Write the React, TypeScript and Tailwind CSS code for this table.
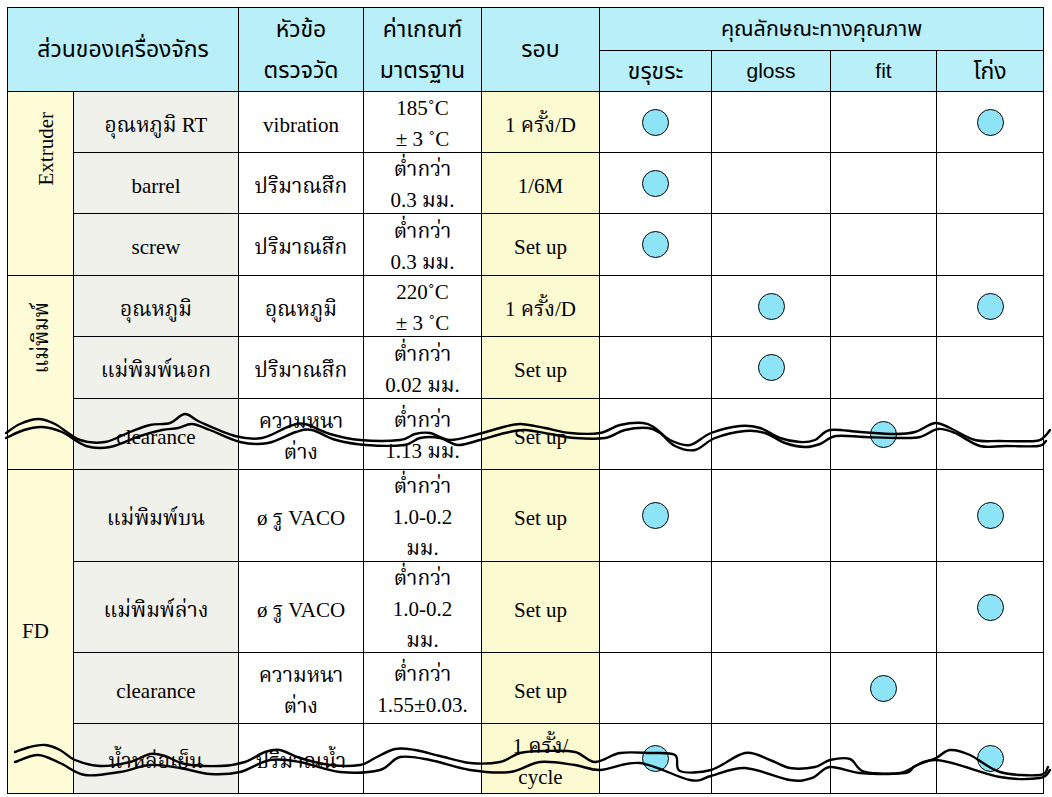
import React from "react"

type Row = {
  group?: { label: string; span: number; kind: "up" | "flat" }
  part: string
  topic: string
  spec: string[]
  cycle: string[]
  marks: number[]
}

const ROWS: Row[] = [
  {
    group: { label: "Extruder", span: 3, kind: "up" },
    part: "อุณหภูมิ RT",
    topic: "vibration",
    spec: ["185˚C", "± 3 ˚C"],
    cycle: ["1 ครั้ง/D"],
    marks: [1, 0, 0, 1],
  },
  { part: "barrel", topic: "ปริมาณสึก", spec: ["ต่ำกว่า", "0.3 มม."], cycle: ["1/6M"], marks: [1, 0, 0, 0] },
  { part: "screw", topic: "ปริมาณสึก", spec: ["ต่ำกว่า", "0.3 มม."], cycle: ["Set up"], marks: [1, 0, 0, 0] },
  {
    group: { label: "แม่พิมพ์", span: 3, kind: "up" },
    part: "อุณหภูมิ",
    topic: "อุณหภูมิ",
    spec: ["220˚C", "± 3 ˚C"],
    cycle: ["1 ครั้ง/D"],
    marks: [0, 1, 0, 1],
  },
  { part: "แม่พิมพ์นอก", topic: "ปริมาณสึก", spec: ["ต่ำกว่า", "0.02 มม."], cycle: ["Set up"], marks: [0, 1, 0, 0] },
  { part: "clearance", topic: "ความหนา\nต่าง", spec: ["ต่ำกว่า", "1.13 มม."], cycle: ["Set up"], marks: [0, 0, 1, 0] },
  {
    group: { label: "FD", span: 4, kind: "flat" },
    part: "แม่พิมพ์บน",
    topic: "ø รู VACO",
    spec: ["ต่ำกว่า", "1.0-0.2", "มม."],
    cycle: ["Set up"],
    marks: [1, 0, 0, 1],
  },
  { part: "แม่พิมพ์ล่าง", topic: "ø รู VACO", spec: ["ต่ำกว่า", "1.0-0.2", "มม."], cycle: ["Set up"], marks: [0, 0, 0, 1] },
  { part: "clearance", topic: "ความหนา\nต่าง", spec: ["ต่ำกว่า", "1.55±0.03."], cycle: ["Set up"], marks: [0, 0, 1, 0] },
  { part: "น้ำหล่อเย็น", topic: "ปริมาณน้ำ", spec: [], cycle: ["1 ครั้ง/", "cycle"], marks: [1, 0, 0, 1] },
]

// hand-drawn strike lines
const WAVES: [number, number][][] = [
  [[6,433],[20,424],[38,419],[55,424],[80,440],[105,442],[130,432],[150,425],[170,423],[185,414],[200,422],[235,436],[262,438],[290,426],[305,424],[330,434],[360,440],[400,440],[415,434],[430,433],[450,440],[475,435],[500,428],[520,424],[545,428],[570,433],[600,433],[620,425],[643,423],[655,428],[670,440],[690,445],[711,433],[740,426],[760,428],[780,438],[800,442],[815,440],[830,430],[860,432],[895,434],[915,432],[935,423],[950,428],[975,440],[1000,441],[1035,441],[1044,437],[1050,430]],
  [[6,438],[24,430],[42,427],[62,432],[86,446],[110,447],[140,436],[162,430],[178,428],[192,424],[210,430],[240,442],[268,443],[296,432],[312,430],[336,440],[366,445],[404,445],[420,438],[440,438],[458,445],[480,440],[505,433],[525,430],[550,434],[575,438],[605,438],[625,430],[648,428],[660,433],[675,446],[695,450],[715,438],[745,431],[765,433],[785,443],[805,447],[820,444],[836,436],[865,437],[900,438],[920,437],[938,429],[955,433],[980,446],[1005,446],[1038,446],[1046,441]],
  [[15,752],[30,747],[45,745],[60,750],[75,760],[100,766],[130,762],[150,754],[165,756],[185,764],[220,766],[245,762],[265,752],[280,750],[300,758],[330,765],[360,765],[375,758],[395,749],[415,750],[440,756],[470,763],[500,762],[520,753],[545,751],[575,752],[595,762],[620,753],[650,753],[675,755],[680,771],[711,770],[745,753],[770,760],[790,768],[815,767],[830,760],[850,759],[865,772],[905,773],[915,766],[936,758],[950,750],[970,755],[1000,772],[1040,775],[1048,767]],
  [[15,762],[38,755],[60,763],[85,775],[120,772],[150,765],[180,768],[210,774],[240,772],[270,760],[300,762],[340,772],[380,770],[400,757],[430,760],[470,770],[510,772],[540,762],[575,765],[600,770],[640,763],[690,780],[711,776],[745,768],[790,780],[812,778],[830,767],[860,773],[900,773],[936,760],[1000,777],[1040,778],[1050,770]],
]

function smooth(pts: [number, number][]) {
  let d = `M${pts[0][0]},${pts[0][1]}`
  for (let i = 0; i < pts.length - 1; i++) {
    const p0 = pts[i - 1] || pts[i]
    const p1 = pts[i]
    const p2 = pts[i + 1]
    const p3 = pts[i + 2] || p2
    const c1x = p1[0] + (p2[0] - p0[0]) / 6
    const c1y = p1[1] + (p2[1] - p0[1]) / 6
    const c2x = p2[0] - (p3[0] - p1[0]) / 6
    const c2y = p2[1] - (p3[1] - p1[1]) / 6
    d += ` C${c1x},${c1y} ${c2x},${c2y} ${p2[0]},${p2[1]}`
  }
  return d
}

const body = "font-['Liberation_Serif','Noto_Serif_Thai','Noto_Sans_Thai',serif] text-[21px] leading-[31px] text-black"
const head = "font-['Liberation_Sans','Noto_Sans_Thai','Noto_Sans',sans-serif] text-black bg-[#b8eff8]"

function Lines({ lines }: { lines: string[] }) {
  return (
    <div className="flex flex-col items-center">
      {lines.map((l, i) => (
        <span key={i} className="whitespace-nowrap">{l}</span>
      ))}
    </div>
  )
}

function Dot() {
  return <div className="w-[27px] h-[27px] rounded-full bg-[#8ee4f7] border-[1.5px] border-black" />
}

function GroupCell({ g, first }: { g: NonNullable<Row["group"]>; first: boolean }) {
  const span = g.span === 3 ? "row-span-3" : "row-span-4"
  if (g.kind === "up") {
    return (
      <div
        className={`${span} bg-[#fdfcd6] flex justify-center items-start ${
          first ? "pt-[20px] pl-[12px] text-[#2c2c08]" : "pt-[26px] pl-[2px] text-[#45450a]"
        } ${body}`}
      >
        <span className="[writing-mode:vertical-rl] rotate-180">{g.label}</span>
      </div>
    )
  }
  return (
    <div className={`${span} bg-[#fdfcd6] flex items-center pl-[14px] ${body} text-[#2c2c08]`}>
      {g.label}
    </div>
  )
}

export default function App() {
  return (
    <div className="relative w-[1052px] h-[797px] bg-white overflow-hidden">
      <div className="pt-[7px] pl-[7px]">
        <div className="inline-grid bg-black p-px gap-px grid-cols-[65px_164px_124px_117px_117px_111px_118px_105px_106px] grid-rows-[42px_40px_60px_60px_61px_60px_61px_70px_91px_90px_70px_69px]">
          {/* header */}
          <div className={`col-span-2 row-span-2 flex items-center justify-center text-[23px] ${head}`}>ส่วนของเครื่องจักร</div>
          <div className={`row-span-2 flex flex-col items-center justify-center text-[23px] leading-[41px] ${head}`}>
            <span>หัวข้อ</span>
            <span>ตรวจวัด</span>
          </div>
          <div className={`row-span-2 flex flex-col items-center justify-center text-[23px] leading-[41px] ${head}`}>
            <span>ค่าเกณฑ์</span>
            <span>มาตรฐาน</span>
          </div>
          <div className={`row-span-2 flex items-center justify-center text-[23px] ${head}`}>รอบ</div>
          <div className={`col-span-4 flex items-center justify-center text-[21.5px] ${head}`}>คุณลักษณะทางคุณภาพ</div>
          <div className={`flex items-center justify-center text-[23px] ${head}`}>ขรุขระ</div>
          <div className={`flex items-center justify-center text-[21px] ${head}`}>gloss</div>
          <div className={`flex items-center justify-center text-[21px] ${head}`}>fit</div>
          <div className={`flex items-center justify-center text-[23px] ${head}`}>โก่ง</div>

          {/* body */}
          {ROWS.map((r, i) => (
            <React.Fragment key={i}>
              {r.group && <GroupCell g={r.group} first={i === 0} />}
              <div className={`bg-[#f1f1ec] flex items-center justify-center pt-[6px] ${body}`}>{r.part}</div>
              <div className={`bg-white flex items-center justify-center pt-[6px] ${body}`}>
                <Lines lines={r.topic.split("\n")} />
              </div>
              <div className={`bg-white flex items-center justify-center pt-[4px] ${body}`}>
                <Lines lines={r.spec} />
              </div>
              <div className={`bg-[#fcfad0] flex items-center justify-center pt-[6px] ${body}`}>
                <Lines lines={r.cycle} />
              </div>
              {r.marks.map((m, j) => (
                <div key={j} className="bg-white flex items-center justify-center">
                  {m ? <Dot /> : null}
                </div>
              ))}
            </React.Fragment>
          ))}
        </div>
      </div>

      <svg className="absolute inset-0 pointer-events-none" width="1052" height="797" viewBox="0 0 1052 797" fill="none">
        {WAVES.map((w, i) => (
          <path key={i} d={smooth(w)} stroke="#000" strokeWidth="2.4" strokeLinecap="round" strokeLinejoin="round" />
        ))}
      </svg>
    </div>
  )
}
